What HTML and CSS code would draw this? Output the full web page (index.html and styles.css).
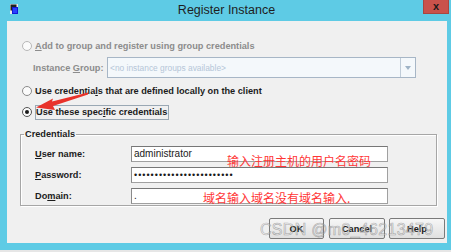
FILE: index.html
```html
<!DOCTYPE html>
<html lang="en">
<head>
    <meta charset="UTF-8">
    <title>Register Instance</title>
    <link rel="stylesheet" href="styles.css">
</head>
<body>
    <div class="window">
        <div class="titlebar">
            <div class="title-left">
                <svg class="app-icon" width="8" height="10" viewBox="0 0 8 10">
                    <rect x="0" y="0" width="8" height="10" fill="#e8e8e8"/>
                    <rect x="0.5" y="0.5" width="6" height="6" fill="#202020"/>
                    <rect x="2" y="3" width="6" height="7" fill="#1018d8"/>
                    <rect x="3" y="4" width="4" height="5" fill="#2a40ff"/>
                </svg>
            </div>
            <div class="title">Register Instance</div>
            <div class="title-right">
                <div class="close-btn">x</div>
            </div>
        </div>

        <div class="client">
            <div class="option disabled first">
                <span class="radio"></span>
                <span><u>A</u>dd to group and register using group credentials</span>
            </div>
            <div class="group-row">
                <span class="group-label">Instance <u>G</u>roup:</span>
                <div class="combo">
                    <span class="combo-text">&lt;no instance groups available&gt;</span>
                    <span class="combo-arrow"></span>
                </div>
            </div>
            <div class="option second">
                <span class="radio"></span>
                <span>Use credentia<u>l</u>s that are defined locally on the client</span>
            </div>
            <div class="option third">
                <span class="radio checked"></span>
                <span class="focus">Use these spec<u>i</u>fic credentials</span>
            </div>

            <fieldset class="creds">
                <legend>Credentials</legend>
                <div class="field-row">
                    <label><u>U</u>ser name:</label>
                    <div class="field">administrator</div>
                </div>
                <div class="field-row">
                    <label><u>P</u>assword:</label>
                    <div class="field dots">••••••••••••••••••••••••</div>
                </div>
                <div class="field-row">
                    <label>Do<u>m</u>ain:</label>
                    <div class="field">.</div>
                </div>
            </fieldset>

            <div class="buttons">
                <button class="btn ok">OK</button>
                <button class="btn">Cancel</button>
                <button class="btn">Help</button>
            </div>
        </div>
        <div class="bottom-strip"></div>

        <!-- annotations drawn over the screenshot -->
        <svg class="arrow" width="451" height="252" viewBox="0 0 451 252">
            <path d="M88 92.5 L52 101.5 L53 98.5 L36 107.5 L55 110 L53 106 L88 94.5 Z" fill="#e8322a"/>
        </svg>
        <div class="note note-user">输入注册主机的用户名密码</div>
        <div class="note note-domain">域名输入域名没有域名输入.</div>
        <div class="watermark">CSDN @m0_46213479</div>
    </div>
</body>
</html>
```

FILE: styles.css
```css
* {
    margin: 0;
    padding: 0;
    box-sizing: border-box;
}

body {
    width: 451px;
    height: 252px;
    overflow: hidden;
    background: #5ecbe5;
    font-family: 'Liberation Sans', Arial, sans-serif;
}

.window {
    position: relative;
    height: 252px;
}

.titlebar {
    height: 21px;
    display: grid;
    grid-template-columns: 1fr auto 1fr;
}

.title-left {
    padding: 4px 0 0 10px;
}

.app-icon {
    display: block;
}

.title {
    font-size: 12.5px;
    color: #1e1e1e;
    line-height: 21px;
    padding-left: 2px;
}

.title-right {
    display: flex;
    justify-content: flex-end;
    padding-right: 2px;
}

.close-btn {
    width: 26px;
    height: 14px;
    background: #c9524b;
    border: 1px solid #a84640;
    border-top: none;
    color: #1a1a1a;
    font-weight: bold;
    font-size: 11px;
    line-height: 12px;
    text-align: center;
}

.client {
    margin: 0 4px 0 7px;
    height: 222px;
    background: #f0f0f0;
    display: flex;
    flex-direction: column;
    font-size: 9.2px;
    font-weight: bold;
    color: #1c1c1c;
}

.option {
    height: 14px;
    display: flex;
    align-items: center;
    gap: 3px;
    padding-left: 15px;
}

.option.first {
    margin-top: 18px;
}

.option.second {
    margin-top: 6px;
}

.option.third {
    margin-top: 7px;
}

.disabled {
    color: #8c8c8c;
}

.radio {
    width: 10px;
    height: 10px;
    border-radius: 50%;
    border: 1px solid #8a8a8a;
    background: #fbfbfb;
    position: relative;
}

.disabled .radio {
    border-color: #b8b8b8;
}

.radio.checked {
    border-color: #555;
}

.radio.checked::after {
    content: "";
    position: absolute;
    left: 2px;
    top: 2px;
    width: 4px;
    height: 4px;
    border-radius: 50%;
    background: #1a1a1a;
}

.focus {
    border: 1px solid #9aa8b4;
    padding: 1px 1px 1px 0;
    line-height: 11px;
}

.group-row {
    margin-top: 4px;
    height: 21px;
    display: flex;
    align-items: center;
    padding-left: 26px;
    color: #8c8c8c;
}

.group-label {
    width: 74px;
}

.combo {
    width: 309px;
    height: 21px;
    border: 1px solid #a7b6c6;
    background: #f4f8fb;
    display: flex;
    align-items: center;
}

.combo-text {
    flex: 1;
    font-weight: normal;
    color: #b4c6d8;
    padding-left: 2px;
    font-size: 8.4px;
}

.combo-arrow {
    width: 15px;
    height: 19px;
    border-left: 1px solid #c0ccd8;
    position: relative;
}

.combo-arrow::after {
    content: "";
    position: absolute;
    left: 4px;
    top: 8px;
    border-left: 3px solid transparent;
    border-right: 3px solid transparent;
    border-top: 4px solid #9fb3c6;
}

.creds {
    margin: 9px 10px 0 13px;
    border: 1px solid #a6a6a6;
    box-shadow: inset 1px 1px 0 #fff, 1px 1px 0 #fff;
    padding: 6px 0 1px 0;
    display: flex;
    flex-direction: column;
    gap: 5px;
}

.creds legend {
    margin-left: 3px;
    padding: 0 1px;
    line-height: 12px;
}

.field-row {
    display: flex;
    align-items: center;
    padding-left: 14px;
}

.field-row label {
    width: 96px;
}

.field {
    width: 257px;
    height: 16px;
    background: #fff;
    border: 1px solid #a0a0a0;
    border-top-color: #777;
    border-left-color: #8a8a8a;
    font-weight: normal;
    font-size: 10px;
    line-height: 14px;
    padding-left: 2px;
    color: #1a1a1a;
}

.field.dots {
    letter-spacing: 1px;
    font-size: 9px;
}

.buttons {
    margin-top: 12px;
    display: flex;
    justify-content: flex-end;
    gap: 4px;
    padding-right: 2px;
}

.btn {
    width: 56px;
    height: 21px;
    border: 1px solid #7a7a7a;
    border-radius: 2px;
    background: linear-gradient(#f6f6f6, #e0e0e0);
    font-family: inherit;
    font-weight: bold;
    font-size: 9.2px;
    color: #1c1c1c;
}

.btn.ok {
    width: 55px;
    margin-right: 1px;
}

.bottom-strip {
    margin-top: 7px;
    height: 2px;
    background: #e6e6e6;
}

.arrow {
    position: absolute;
    left: 0;
    top: 0;
    pointer-events: none;
}

.note {
    position: absolute;
    font-family: 'Noto Sans CJK SC', sans-serif;
    font-size: 12px;
    line-height: 12px;
    color: #ff3636;
}

.note-user {
    left: 227px;
    top: 155px;
}

.note-domain {
    left: 203px;
    top: 192px;
}

.watermark {
    position: absolute;
    left: 260px;
    top: 221px;
    font-size: 16px;
    color: rgba(235, 235, 235, 0.4);
    -webkit-text-stroke: 0.6px rgba(110, 110, 110, 0.55);
    letter-spacing: 0.3px;
}
```
